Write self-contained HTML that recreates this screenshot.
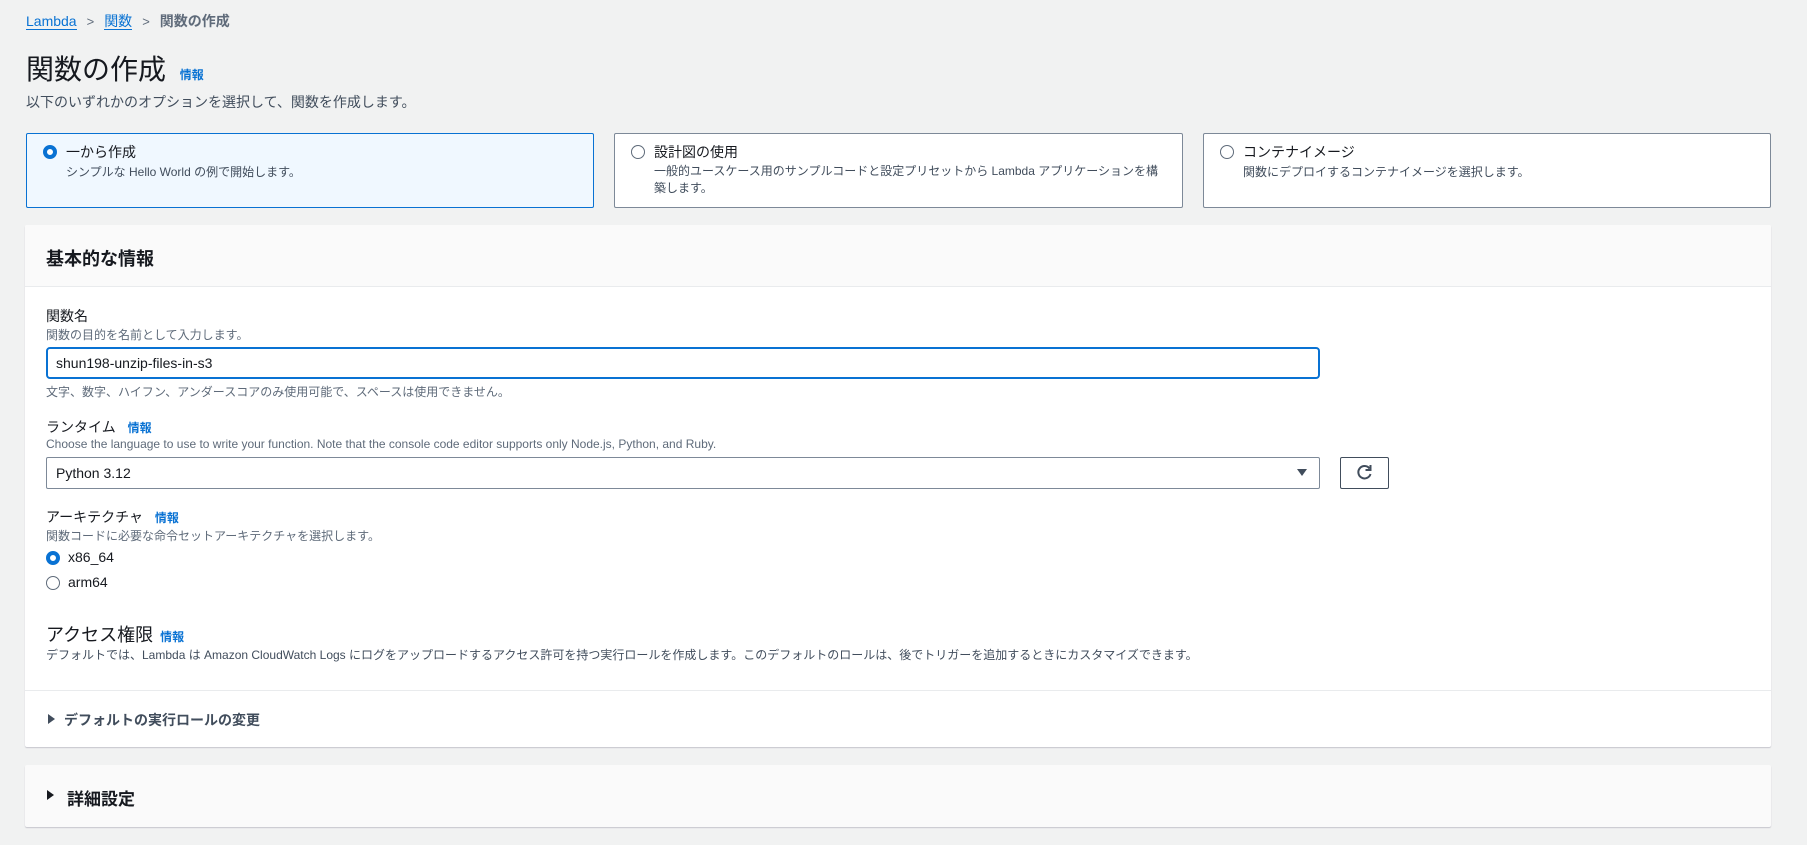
<!DOCTYPE html>
<html><head><meta charset="utf-8"><style>
*{box-sizing:border-box;margin:0;padding:0}
body{width:1807px;height:845px;background:#f1f2f2;font-family:"Liberation Sans","Noto Sans CJK JP",sans-serif;color:#16191f;position:relative;overflow:hidden}
.a{position:absolute;white-space:nowrap}
.link{color:#0972d3}
.info{color:#0972d3;font-weight:bold;font-size:12px}
.sm{font-size:12px;color:#5f6b7a}
.lb{font-size:14px;color:#16191f}
.card{position:absolute;top:133px;height:75px;border:1px solid #7d8998;border-radius:2px;background:#fff}
.card.sel{border-color:#0972d3;background:#f0f8ff}
.rad{position:absolute;width:14px;height:14px;border-radius:50%;border:1.5px solid #5f6b7a;background:#fff}
.rad.on{border:4px solid #0972d3}
.panel{position:absolute;left:25px;width:1746px;background:#fff;border-radius:2px;box-shadow:0 1px 1px #c6c6cd}
.tri{width:0;height:0;border-left:7px solid #414d5c;border-top:5px solid transparent;border-bottom:5px solid transparent;position:absolute}
</style></head><body>
<div class="a" style="left:26px;top:11px;font-size:14px"><span class="link" style="border-bottom:1px solid #0972d3">Lambda</span><span style="color:#5f6b7a;margin:0 10px;font-size:13px">&gt;</span><span class="link" style="border-bottom:1px solid #0972d3">関数</span><span style="color:#5f6b7a;margin:0 10px;font-size:13px">&gt;</span><span style="color:#5f6b7a;font-weight:bold">関数の作成</span></div>
<div class="a" style="left:26px;top:48px;font-size:28px;color:#16191f">関数の作成 <span class="info" style="font-size:12px;margin-left:6px">情報</span></div>
<div class="a" style="left:26px;top:92px;font-size:14px;color:#414d5c">以下のいずれかのオプションを選択して、関数を作成します。</div>

<div class="card sel" style="left:26px;width:568px"><div class="rad on" style="left:16px;top:11px"></div><div class="a lb" style="left:39px;top:8px">一から作成</div><div class="a sm" style="left:39px;top:29px;color:#414d5c">シンプルな Hello World の例で開始します。</div></div>
<div class="card" style="left:614px;width:569px"><div class="rad" style="left:16px;top:11px"></div><div class="a lb" style="left:39px;top:8px">設計図の使用</div><div class="a sm" style="left:39px;top:29px;color:#414d5c;line-height:17px">一般的ユースケース用のサンプルコードと設定プリセットから Lambda アプリケーションを構<br>築します。</div></div>
<div class="card" style="left:1203px;width:568px"><div class="rad" style="left:16px;top:11px"></div><div class="a lb" style="left:39px;top:8px">コンテナイメージ</div><div class="a sm" style="left:39px;top:29px;color:#414d5c">関数にデプロイするコンテナイメージを選択します。</div></div>

<div class="panel" style="top:225px;height:522px">
<div style="height:62px;background:#fafafa;border-bottom:1px solid #e9ebed;border-radius:2px 2px 0 0"></div>
<div class="a" style="left:21px;top:20px;font-size:18px;font-weight:bold">基本的な情報</div>
<div class="a lb" style="left:21px;top:81px">関数名</div>
<div class="a sm" style="left:21px;top:101px">関数の目的を名前として入力します。</div>
<div class="a" style="left:21px;top:122px;width:1274px;height:32px;border:2px solid #0972d3;border-radius:4px;font-size:14px;padding:6px 8px">shun198-unzip-files-in-s3</div>
<div class="a sm" style="left:21px;top:158px">文字、数字、ハイフン、アンダースコアのみ使用可能で、スペースは使用できません。</div>
<div class="a lb" style="left:21px;top:192px">ランタイム <span class="info" style="margin-left:8px">情報</span></div>
<div class="a sm" style="left:21px;top:212px">Choose the language to use to write your function. Note that the console code editor supports only Node.js, Python, and Ruby.</div>
<div class="a" style="left:21px;top:232px;width:1274px;height:32px;border:1px solid #7d8998;border-radius:2px;font-size:14px;padding:7px 9px">Python 3.12<span style="position:absolute;right:12px;top:11px;width:0;height:0;border-top:7px solid #414d5c;border-left:5px solid transparent;border-right:5px solid transparent"></span></div>
<div class="a" style="left:1315px;top:232px;width:49px;height:32px;border:1px solid #414d5c;border-radius:2px">
<svg width="47" height="30" viewBox="0 0 47 30"><path d="M28.5 10.5 A6.2 6.2 0 1 0 29.5 16" fill="none" stroke="#414d5c" stroke-width="2"/><path d="M29.5 7 V12 H24.5" fill="none" stroke="#414d5c" stroke-width="2"/></svg></div>
<div class="a lb" style="left:21px;top:282px">アーキテクチャ <span class="info" style="margin-left:8px">情報</span></div>
<div class="a sm" style="left:21px;top:302px">関数コードに必要な命令セットアーキテクチャを選択します。</div>
<div class="rad on" style="left:21px;top:326px"></div><div class="a lb" style="left:43px;top:324px">x86_64</div>
<div class="rad" style="left:21px;top:351px"></div><div class="a lb" style="left:43px;top:349px">arm64</div>
<div class="a" style="left:21px;top:396px;font-size:18px">アクセス権限 <span class="info" style="margin-left:2px">情報</span></div>
<div class="a sm" style="left:21px;top:421px;color:#414d5c">デフォルトでは、Lambda は Amazon CloudWatch Logs にログをアップロードするアクセス許可を持つ実行ロールを作成します。このデフォルトのロールは、後でトリガーを追加するときにカスタマイズできます。</div>
<div style="position:absolute;left:0;right:0;top:465px;border-top:1px solid #e9ebed"></div>
<div class="tri" style="left:23px;top:489px"></div>
<div class="a" style="left:39px;top:485px;font-size:14px;font-weight:bold;color:#414d5c">デフォルトの実行ロールの変更</div>
</div>

<div class="panel" style="top:765px;height:62px;background:#fafafa">
<div class="tri" style="left:22px;top:25px;border-left-color:#16191f"></div>
<div class="a" style="left:42px;top:20px;font-size:17px;font-weight:bold">詳細設定</div>
</div>
</body></html>
